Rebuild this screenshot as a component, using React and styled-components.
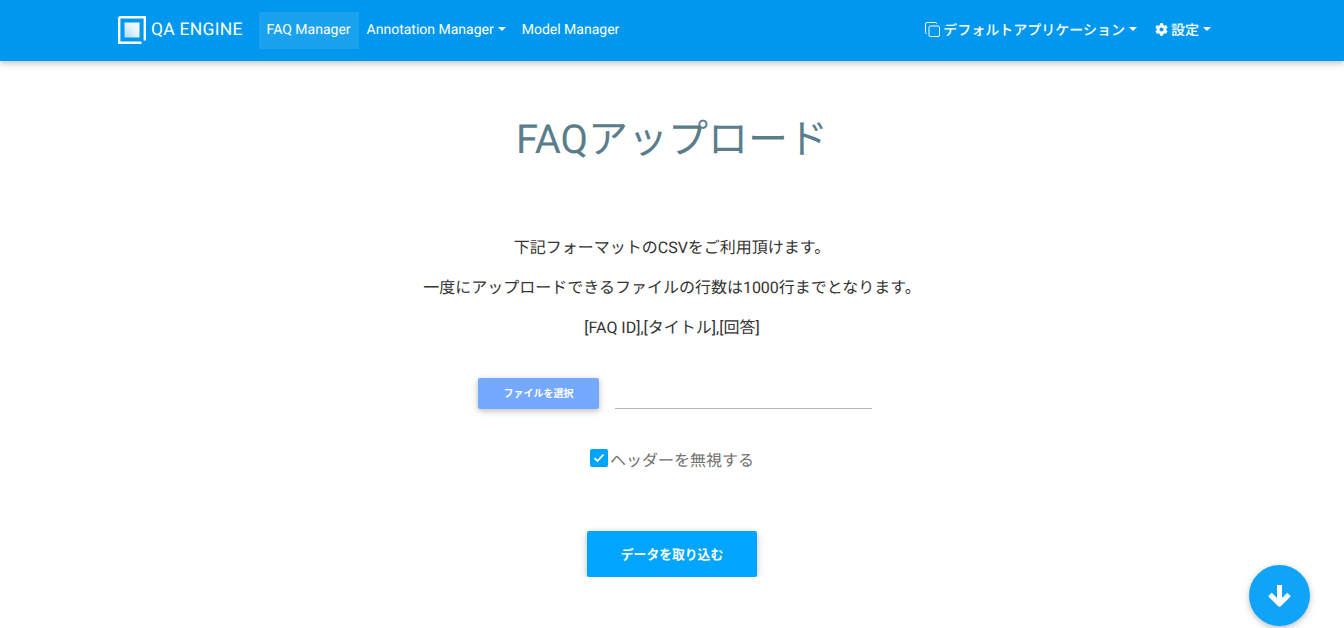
import React from "react"
import styled, { createGlobalStyle } from "styled-components"
import { FaCog } from "react-icons/fa"

const FONT = `Roboto, "Noto Sans CJK JP", sans-serif`

const GlobalStyle = createGlobalStyle`
  html, body {
    margin: 0;
    padding: 0;
    background: #fff;
    font-family: ${FONT};
    text-rendering: geometricPrecision;
  }
`

const Navbar = styled.nav`
  height: 61px;
  background: #0098ee;
  box-shadow: 0 2px 5px rgba(0, 0, 0, 0.16), 0 2px 10px rgba(0, 0, 0, 0.12);
  display: flex;
  justify-content: center;
`

const NavInner = styled.div`
  width: 1110px;
  display: flex;
  align-items: center;
  justify-content: space-between;
`

const NavGroup = styled.div`
  display: flex;
  align-items: center;
  gap: ${p => p.$gap || 0}px;
  margin-right: ${p => p.$right || 0}px;
`

const Brand = styled.a`
  display: flex;
  align-items: center;
  gap: 5px;
  margin: 0 16px 0 1px;
  color: #fff;
  font-size: 17.5px;
  font-weight: 400;
  letter-spacing: 0.25px;
  white-space: nowrap;
  padding-bottom: 1px;
`

const NavItem = styled.a`
  display: flex;
  align-items: center;
  box-sizing: border-box;
  height: 37px;
  padding: 0 8px 2px;
  color: #fff;
  font-size: 14px;
  font-weight: ${p => p.$weight || 400};
  white-space: nowrap;
  background: ${p => (p.$active ? "rgba(255, 255, 255, 0.1)" : "transparent")};
`

const Caret = styled.span`
  display: inline-block;
  margin-left: 4px;
  border-top: 4px solid #fff;
  border-left: 4px solid transparent;
  border-right: 4px solid transparent;
  margin-bottom: 2px;
`

const IconWrap = styled.span`
  display: inline-flex;
  margin-right: 3px;
  font-size: 13px;
`

const Main = styled.main`
  display: flex;
  flex-direction: column;
  align-items: center;
`

const Title = styled.h1`
  margin: 52px 0 0;
  color: #5a7d8c;
  font-size: 40px;
  font-weight: 400;
  line-height: 54px;
`

const Notes = styled.div`
  margin-top: 69px;
  display: flex;
  flex-direction: column;
  align-items: center;
  gap: 16px;
`

const Note = styled.p`
  margin: 0;
  color: #333;
  font-size: 16px;
  line-height: 24px;
`

const FileRow = styled.div`
  margin: 38px 0 0 6px;
  display: flex;
  align-items: flex-end;
  gap: 16px;
`

const FileButton = styled.button`
  width: 121px;
  height: 31px;
  border: 0;
  padding: 0 0 2px;
  border-radius: 2px;
  background: #75a8ff;
  color: #fff;
  font-family: ${FONT};
  font-size: 10px;
  font-weight: 700;
  box-shadow: 0 2px 5px rgba(0, 0, 0, 0.16), 0 2px 10px rgba(0, 0, 0, 0.12);
`

const FileInput = styled.div`
  width: 257px;
  height: 30px;
  border-bottom: 1px solid #b5b5b5;
`

const CheckRow = styled.label`
  margin-top: 40px;
  display: flex;
  align-items: center;
  color: #6f6f6f;
  font-size: 16px;
  line-height: 24px;
`

const CheckBox = styled.span`
  width: 18px;
  height: 18px;
  margin: -6px 2px 0 0;
  border-radius: 2px;
  background: #00a5fb;
  display: flex;
  align-items: center;
  justify-content: center;
`

const SubmitButton = styled.button`
  margin-top: 58px;
  width: 170px;
  height: 46px;
  border: 0;
  padding: 0 0 2px;
  border-radius: 2px;
  background: #00a5ff;
  color: #fff;
  font-family: ${FONT};
  font-size: 12.8px;
  font-weight: 700;
  box-shadow: 0 2px 5px rgba(0, 0, 0, 0.16), 0 2px 10px rgba(0, 0, 0, 0.12);
`

const Fab = styled.button`
  position: fixed;
  left: 1249px;
  top: 565px;
  width: 61px;
  height: 61px;
  border: 0;
  padding: 0;
  border-radius: 50%;
  background: #0fa3fa;
  display: flex;
  align-items: center;
  justify-content: center;
  box-shadow: 0 2px 5px rgba(0, 0, 0, 0.16), 0 2px 10px rgba(0, 0, 0, 0.12);
`

const Logo = () => (
  <svg width="28" height="28" viewBox="0 0 28 28">
    <defs>
      <linearGradient id="logoFill" x1="0" y1="1" x2="1" y2="0">
        <stop offset="0" stopColor="#a8d8f8" />
        <stop offset="0.55" stopColor="#e6f4fd" />
        <stop offset="1" stopColor="#fff" />
      </linearGradient>
    </defs>
    <path d="M1.2 1.2 H26.8 V24.5 M23.5 26.8 H1.2 V1.2" fill="none" stroke="#fff" strokeWidth="2.4" />
    <rect x="6.5" y="6.5" width="15" height="15" fill="url(#logoFill)" />
  </svg>
)

const CloneIcon = () => (
  <svg width="15" height="15" viewBox="0 0 15 15" fill="none" stroke="#fff" strokeWidth="1">
    <rect x="4" y="4" width="10.5" height="10.5" rx="1.5" />
    <path d="M11.5 1.8 V1.5 Q11.5 0.5 10.5 0.5 H2 Q0.5 0.5 0.5 2 V10.5 Q0.5 11.5 1.5 11.5 H2" />
  </svg>
)

const Check = () => (
  <svg width="12" height="10" viewBox="0 0 12 10">
    <path d="M1.5 5.2 L4.5 8 L10.5 1.5" fill="none" stroke="#fff" strokeWidth="1.8" />
  </svg>
)

const ArrowDown = () => (
  <svg width="23" height="23" viewBox="0 0 23 23" fill="none" stroke="#fff" strokeWidth="5">
    <path d="M11.5 1 V19" />
    <path d="M2 10.5 L11.5 20 L21 10.5" strokeLinejoin="round" />
  </svg>
)

export default function App() {
  return (
    <>
      <GlobalStyle />
      <Navbar>
        <NavInner>
          <NavGroup>
            <Brand>
              <Logo />
              QA ENGINE
            </Brand>
            <NavItem $active>FAQ Manager</NavItem>
            <NavItem>
              Annotation Manager
              <Caret />
            </NavItem>
            <NavItem>Model Manager</NavItem>
          </NavGroup>
          <NavGroup $gap={2} $right={8}>
            <NavItem $weight={500}>
              <IconWrap>
                <CloneIcon />
              </IconWrap>
              デフォルトアプリケーション
              <Caret />
            </NavItem>
            <NavItem $weight={500}>
              <IconWrap>
                <FaCog />
              </IconWrap>
              設定
              <Caret />
            </NavItem>
          </NavGroup>
        </NavInner>
      </Navbar>
      <Main>
        <Title>FAQアップロード</Title>
        <Notes>
          <Note>下記フォーマットのCSVをご利用頂けます。</Note>
          <Note>一度にアップロードできるファイルの行数は1000行までとなります。</Note>
          <Note>[FAQ ID],[タイトル],[回答]</Note>
        </Notes>
        <FileRow>
          <FileButton>ファイルを選択</FileButton>
          <FileInput />
        </FileRow>
        <CheckRow>
          <CheckBox>
            <Check />
          </CheckBox>
          ヘッダーを無視する
        </CheckRow>
        <SubmitButton>データを取り込む</SubmitButton>
      </Main>
      <Fab>
        <ArrowDown />
      </Fab>
    </>
  )
}
